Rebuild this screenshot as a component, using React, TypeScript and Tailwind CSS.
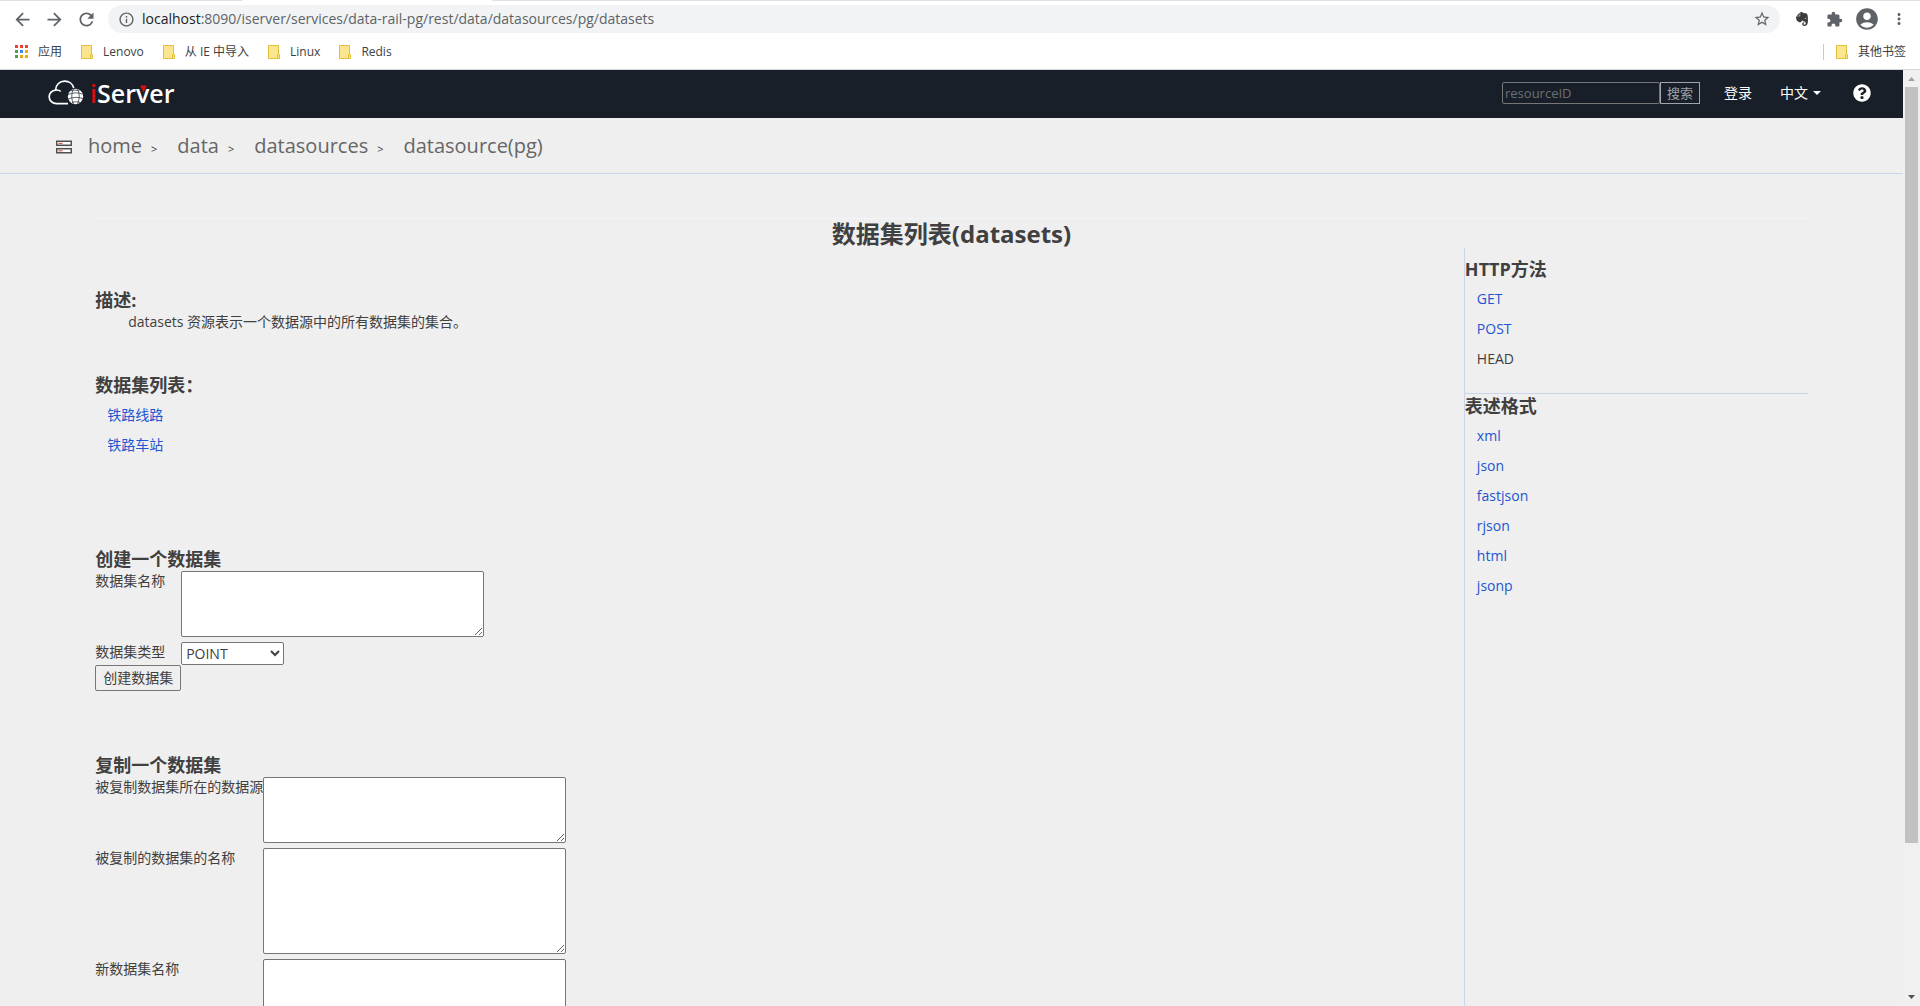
import type { ReactNode } from "react";
import {
  MdAccountCircle,
  MdArrowBack,
  MdArrowForward,
  MdExtension,
  MdInfoOutline,
  MdMoreVert,
  MdRefresh,
  MdStarBorder,
} from "react-icons/md";
import { FaEvernote, FaQuestionCircle } from "react-icons/fa";

const bookmarks = ["Lenovo", "从 IE 中导入", "Linux", "Redis"];
const crumbs = ["home", "data", "datasources", "datasource(pg)"];
const datasets = ["铁路线路", "铁路车站"];
const formats = ["xml", "json", "fastjson", "rjson", "html", "jsonp"];
const datasetTypes = ["POINT", "LINE", "REGION", "TEXT", "TABULAR"];

function FolderIcon() {
  return (
    <svg width="12" height="14" viewBox="0 0 12 14" className="shrink-0">
      <path d="M.5.5h10v9h1v4H.5z" fill="#fbe58f" stroke="#e3bf3c" />
      <path d="M9.5 13.5v-4h1" fill="none" stroke="#e3bf3c" />
    </svg>
  );
}

function AppsIcon() {
  const colors = [
    "#ea4335", "#ea4335", "#ea4335",
    "#4a9c5b", "#4285f4", "#f2a60d",
    "#4a9c5b", "#f2a60d", "#f2a60d",
  ];
  return (
    <svg width="13" height="13" viewBox="0 0 13 13" className="shrink-0">
      {colors.map((fill, i) => (
        <rect key={i} x={(i % 3) * 5} y={Math.floor(i / 3) * 5} width="3" height="3" fill={fill} />
      ))}
    </svg>
  );
}

function CloudIcon() {
  return (
    <svg width="36" height="26" viewBox="0 0 36 26" fill="none" className="shrink-0">
      <path
        d="M20 23.700H8.500C4.500 23.700 1.200 20.700 1.200 16.900c0-3.800 2.900-6.500 6.400-6.800C7.600 5 11.500 1.200 16.600 1.200c4.600 0 8.300 2.900 9.100 7"
        stroke="#fff"
        strokeWidth="1.700"
      />
      <path d="M7.500 10.100c2.200-.3 4 .2 5.300 1.400" stroke="#fff" strokeWidth="1.500" />
      <circle cx="27.500" cy="16.500" r="7.700" fill="#fff" />
      <g stroke="#191f28" strokeWidth=".7">
        <path d="M20 14.500c5-2 10-2.200 14-.5M20 19c5-2 10-2.200 15-.5M24 22.500c3-1 6-1 8 0M22.500 11c3-1.200 6-1.300 9 0" />
        <path d="M25.500 9c-2.300 4.500-2.300 10 0 15M29.500 9c2.300 4.500 2.300 10 0 15" />
      </g>
    </svg>
  );
}

function ServerIcon() {
  return (
    <svg width="16" height="14" viewBox="0 0 16 14" fill="none" className="mt-[3px] shrink-0">
      <rect x=".75" y="1.250" width="14.500" height="4" fill="#fff" stroke="#505050" strokeWidth="1.500" />
      <rect x=".75" y="8.750" width="14.500" height="4" fill="#fff" stroke="#505050" strokeWidth="1.500" />
      <path d="M2.500 3.300h4M2.500 10.800h4" stroke="#c33" />
    </svg>
  );
}

function BrowserBar() {
  return (
    <div className="shrink-0 border-b border-[#d5d7da] bg-white">
      {/* bottom edge of the tab strip, open under the active tab */}
      <div className="flex h-px">
        <div className="w-[242px] bg-[#dee1e6]" />
        <div className="w-[250px]" />
        <div className="flex-1 bg-[#dee1e6]" />
      </div>
      <div className="flex h-[36px] items-center px-3 text-[#5f6368]">
        <div className="mr-[11px] flex items-center gap-[11px]">
          <button type="button" aria-label="back"><MdArrowBack size={21} /></button>
          <button type="button" aria-label="forward"><MdArrowForward size={21} /></button>
          <button type="button" aria-label="reload"><MdRefresh size={21} /></button>
        </div>
        <div className="flex h-7 flex-1 items-center rounded-full bg-[#f1f3f4] pr-[9px] pl-[10px]">
          <MdInfoOutline size={17} />
          <span className="ml-[7px] flex-1 text-[14px] leading-5">
            <span className="text-[#202124]">localhost</span>
            :8090/iserver/services/data-rail-pg/rest/data/datasources/pg/datasets
          </span>
          <button type="button" aria-label="bookmark"><MdStarBorder size={18} /></button>
        </div>
        <div className="ml-[14px] flex items-center">
          <FaEvernote size={16} className="text-[#3c3c3c]" />
          <MdExtension size={17} className="ml-4" />
          <MdAccountCircle size={26} className="ml-[11px]" />
          <MdMoreVert size={18} className="ml-[10px]" />
        </div>
      </div>
      <div className="flex h-8 items-center pr-[14px] pb-[3px] pl-[15px] text-[12px] leading-5 text-[#3c4043]">
        <AppsIcon />
        <span className="ml-[10px]">应用</span>
        {bookmarks.map((name) => (
          <a key={name} href="#" className="ml-[19px] flex items-center gap-[10px]">
            <FolderIcon />
            {name}
          </a>
        ))}
        <a href="#" className="ml-auto flex items-center gap-[10px] border-l border-[#c8cacd] pl-3 leading-4">
          <FolderIcon />
          其他书签
        </a>
      </div>
    </div>
  );
}

function Header() {
  return (
    <header className="flex h-12 items-center justify-between bg-[#191f28] pr-8 pb-[2px] pl-12 text-[14px] text-white">
      <a href="#" className="flex items-center gap-[6px]">
        <CloudIcon />
        <span className="text-[25px] leading-8 font-semibold">
          <span className="text-[#d40f0f]">i</span>Ser
          <span className="relative">
            v
            <svg width="7" height="8" viewBox="0 0 8 8" className="absolute top-[9px] left-1">
              <path d="M0 0h8L4 8z" fill="#d40f0f" />
            </svg>
          </span>
          er
        </span>
      </a>
      <div className="flex items-center">
        <form className="flex">
          <input
            type="text"
            aria-label="resourceID"
            placeholder="resourceID"
            className="h-[22px] w-[158px] rounded-xs border border-[#767676] px-[2px] text-[13px] placeholder:text-[#6d7075]"
          />
          <button type="button" className="h-[22px] w-10 border border-[#a0a3a8] text-[13px] leading-5 text-[#a0a3a8]">
            搜索
          </button>
        </form>
        <a href="#" className="ml-6">登录</a>
        <button type="button" className="ml-7 flex items-center gap-[5px]">
          中文
          <svg width="8" height="4" viewBox="0 0 8 4"><path d="M0 0h8L4 4z" fill="#fff" /></svg>
        </button>
        <a href="#" aria-label="help" className="ml-8"><FaQuestionCircle size={18} /></a>
      </div>
    </header>
  );
}

function SectionTitle({ children }: { children: ReactNode }) {
  return <h2 className="text-[18px] leading-6 font-bold">{children}</h2>;
}

function LinkList({ items }: { items: string[] }) {
  return (
    <ul className="mt-[3px] pl-3 leading-[30px]">
      {items.map((item) => (
        <li key={item}>
          {item === "HEAD" ? item : <a href="#" className="text-[#2255d0]">{item}</a>}
        </li>
      ))}
    </ul>
  );
}

function Area({ id, size = "h-[66px]" }: { id: string; size?: string }) {
  return (
    <textarea
      id={id}
      className={`block w-[303px] resize rounded-xs border border-[#767676] bg-white ${size}`}
    />
  );
}

function Scrollbar() {
  return (
    <div className="flex w-[17px] shrink-0 flex-col items-center justify-between bg-[#f0f0f0] py-[7px]">
      <svg width="7" height="4" viewBox="0 0 7 4"><path d="M0 4h7L3.500 0z" fill="#a3a3a3" /></svg>
      <div className="mt-[6px] w-[13px] basis-[82%] bg-[#c1c1c1]" />
      <svg width="7" height="4" viewBox="0 0 7 4" className="mt-auto"><path d="M0 0h7L3.500 4z" fill="#505050" /></svg>
    </div>
  );
}

export default function App() {
  return (
    <div className="flex h-screen flex-col overflow-hidden bg-[#efefef] font-['Open_Sans','Noto_Sans_CJK_SC',sans-serif] text-[14px] leading-5 text-[#404040]">
      <BrowserBar />
      <div className="flex min-h-0 flex-1">
        <div className="flex min-w-0 flex-1 flex-col overflow-hidden">
          <Header />
          <nav className="flex h-14 shrink-0 items-center border-b border-[#c9d5ea] pl-14 text-[#666]">
            <ServerIcon />
            <div className="ml-4 flex">
              {crumbs.map((crumb, i) => (
                <div key={crumb} className="flex items-baseline">
                  <a href="#" className="text-[20px] leading-8">{crumb}</a>
                  {i < crumbs.length - 1 && (
                    <span className="mr-5 ml-[9px] text-[11px] text-[#404040]">&gt;</span>
                  )}
                </div>
              ))}
            </div>
          </nav>

          <main className="flex min-h-0 flex-1 flex-col px-[5%] pt-11">
            <h1 className="border-t border-[#f3f3fb] pt-px text-center text-[24px] leading-7 font-bold">
              数据集列表(datasets)
            </h1>
            <div className="flex min-h-0 flex-1">
              <div className="flex-1 pt-10">
                <section>
                  <SectionTitle>描述:</SectionTitle>
                  <p className="pl-[33px]">datasets 资源表示一个数据源中的所有数据集的集合。</p>
                </section>

                <section className="mt-[41px]">
                  <SectionTitle>数据集列表：</SectionTitle>
                  <LinkList items={datasets} />
                </section>

                {/* Create form */}
                <form className="mt-[87px]">
                  <SectionTitle>创建一个数据集</SectionTitle>
                  <div className="grid grid-cols-[86px_303px] gap-y-[5px]">
                    <label htmlFor="name">数据集名称</label>
                    <Area id="name" />
                    <label htmlFor="type">数据集类型</label>
                    <select
                      id="type"
                      className="h-[23px] w-[103px] rounded-xs border border-[#767676] bg-white"
                    >
                      {datasetTypes.map((type) => (
                        <option key={type}>{type}</option>
                      ))}
                    </select>
                  </div>
                  <button
                    type="button"
                    className="h-[26px] rounded-xs border border-[#767676] px-[7px]"
                  >
                    创建数据集
                  </button>
                </form>

                {/* Copy form */}
                <form className="mt-[41px] border-t border-[#ececec] pt-5">
                  <SectionTitle>复制一个数据集</SectionTitle>
                  <div className="grid grid-cols-[168px_303px] gap-y-[5px]">
                    <label htmlFor="source">被复制数据集所在的数据源</label>
                    <Area id="source" />
                    <label htmlFor="sourceName">被复制的数据集的名称</label>
                    <Area id="sourceName" size="h-[106px]" />
                    <label htmlFor="newName">新数据集名称</label>
                    <Area id="newName" size="h-[106px]" />
                  </div>
                </form>
              </div>

              <aside className="w-86 border-l border-[#c9d5ea] pt-[9px]">
                <SectionTitle>HTTP方法</SectionTitle>
                <LinkList items={["GET", "POST", "HEAD"]} />
                <div className="mt-[19px] border-t border-[#c9d5ea]">
                  <SectionTitle>表述格式</SectionTitle>
                  <LinkList items={formats} />
                </div>
              </aside>
            </div>
          </main>
        </div>
        <Scrollbar />
      </div>
    </div>
  );
}
